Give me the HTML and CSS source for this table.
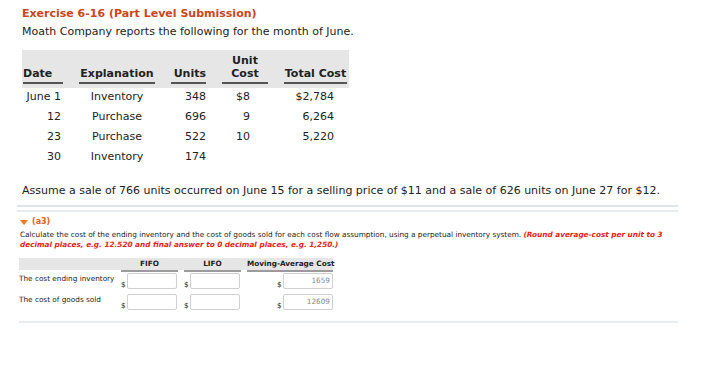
FILE: index.html
```html
<!DOCTYPE html>
<html>
<head>
<meta charset="utf-8">
<link rel="stylesheet" href="styles.css">
</head>
<body>
<div class="page">
  <h1 class="title">Exercise 6-16 (Part Level Submission)</h1>
  <p class="intro">Moath Company reports the following for the month of June.</p>
  <table class="data">
    <colgroup>
      <col class="k1"><col class="k2"><col class="k3"><col class="k4"><col class="k5">
    </colgroup>
    <thead>
      <tr>
        <th class="c1"><div class="u">Date</div></th>
        <th class="c2"><div class="u">Explanation</div></th>
        <th class="c3"><div class="u right">Units</div></th>
        <th class="c4"><div class="u">Unit<br>Cost</div></th>
        <th class="c5"><div class="u">Total Cost</div></th>
      </tr>
    </thead>
    <tbody>
      <tr><td class="c1 r">June 1</td><td class="c2 ctr">Inventory</td><td class="c3 r">348</td><td class="c4 uc">$8</td><td class="c5 tc">$2,784</td></tr>
      <tr><td class="c1 r">12</td><td class="c2 ctr">Purchase</td><td class="c3 r">696</td><td class="c4 uc">9</td><td class="c5 tc">6,264</td></tr>
      <tr><td class="c1 r">23</td><td class="c2 ctr">Purchase</td><td class="c3 r">522</td><td class="c4 uc">10</td><td class="c5 tc">5,220</td></tr>
      <tr><td class="c1 r">30</td><td class="c2 ctr">Inventory</td><td class="c3 r">174</td><td class="c4 uc"></td><td class="c5 tc"></td></tr>
    </tbody>
  </table>
  <p class="assume">Assume a sale of 766 units occurred on June 15 for a selling price of $11 and a sale of 626 units on June 27 for $12.</p>
</div>
<div class="sep"></div>
<div class="part">
  <div class="part-head"><span class="tri"></span>(a3)</div>
  <p class="instr">Calculate the cost of the ending inventory and the cost of goods sold for each cost flow assumption, using a perpetual inventory system. <em class="note">(Round average-cost per unit to 3 decimal places, e.g. 12.520 and final answer to 0 decimal places, e.g. 1,250.)</em></p>
  <table class="ans">
    <colgroup>
      <col class="w0"><col class="w1"><col class="w2"><col class="w3">
    </colgroup>
    <thead>
      <tr>
        <th></th>
        <th class="a1"><div class="u2">FIFO</div></th>
        <th class="a2"><div class="u2">LIFO</div></th>
        <th class="a3"><div class="u2">Moving-Average Cost</div></th>
      </tr>
    </thead>
    <tbody>
      <tr>
        <td class="lbl">The cost ending inventory</td>
        <td><div class="fld"><span class="d">$</span><span class="box"></span></div></td>
        <td class="pad"><div class="fld"><span class="d">$</span><span class="box"></span></div></td>
        <td class="pad"><div class="fld end"><span class="d">$</span><span class="box">1659</span></div></td>
      </tr>
      <tr>
        <td class="lbl">The cost of goods sold</td>
        <td><div class="fld"><span class="d">$</span><span class="box"></span></div></td>
        <td class="pad"><div class="fld"><span class="d">$</span><span class="box"></span></div></td>
        <td class="pad"><div class="fld end"><span class="d">$</span><span class="box">12609</span></div></td>
      </tr>
    </tbody>
  </table>
  <div class="bottom"></div>
</div>
</body>
</html>
```
FILE: styles.css
```css
html, body {
  margin: 0;
  padding: 0;
  background: #fff;
}
body {
  font-family: "DejaVu Sans", Verdana, sans-serif;
  color: #222;
}
.page {
  padding: 6px 0 0 22px;
}
.title {
  margin: 0;
  font-size: 11px;
  line-height: 15px;
  font-weight: bold;
  color: #c9461d;
}
.intro {
  margin: 3px 0 0;
  font-size: 11px;
  line-height: 16px;
}
.data {
  margin-top: 10px;
  border-collapse: collapse;
  table-layout: fixed;
  width: 327px;
  font-size: 11px;
}
.k1 { width: 49px; }
.k2 { width: 92px; }
.k3 { width: 51px; }
.k4 { width: 62px; }
.k5 { width: 73px; }
.data thead tr {
  background: #e6e6e6;
}
.data th {
  padding: 4px 8px 4px 8px;
  vertical-align: bottom;
  font-weight: bold;
  line-height: 13px;
  text-align: center;
  white-space: nowrap;
}
.data th.c1 { padding-left: 1px; text-align: left; }
.data th.c5 { padding-right: 2px; }
.u {
  border-bottom: 2px solid #555;
  padding-bottom: 2px;
}
.u.right { text-align: right; }
.data td {
  height: 20px;
  padding: 0 8px;
  line-height: 18px;
  vertical-align: top;
  white-space: nowrap;
}
.data td.c1 { padding-left: 1px; padding-right: 10px; }
.data td.c5 { padding-right: 15px; padding-left: 8px; }
.data td.uc { padding-right: 26px; text-align: right; }
.r { text-align: right; }
.ctr { text-align: center; }
.tc { text-align: right; }
.assume {
  margin: 15px 0 0;
  font-size: 11px;
  line-height: 16px;
}
.sep {
  margin: 6px 0 0 17px;
  width: 661px;
  height: 3px;
  border-top: 2px solid #dfe3ea;
  border-bottom: 2px solid #e8ebf0;
}
.part {
  padding: 5px 0 0 20px;
}
.part-head {
  display: flex;
  align-items: center;
  gap: 4px;
  font-size: 8px;
  font-weight: bold;
  color: #d9631e;
  line-height: 10px;
}
.tri {
  width: 0;
  height: 0;
  border-left: 4px solid transparent;
  border-right: 4px solid transparent;
  border-top: 5px solid #ef7b22;
}
.instr {
  margin: 3px 0 0;
  width: 650px;
  font-size: 7.3px;
  line-height: 10px;
  color: #222;
}
.note {
  color: #e8231c;
  font-weight: bold;
}
.ans {
  margin: 8px 0 0 -1px;
  border-collapse: collapse;
  table-layout: fixed;
  width: 314px;
  font-size: 7.3px;
}
.w0 { width: 102px; }
.w1 { width: 57px; }
.w2 { width: 63px; }
.w3 { width: 92px; }
.ans thead tr {
  background: #e6e6e6;
}
.ans th {
  padding: 1px 0 0;
  font-weight: bold;
  vertical-align: bottom;
  white-space: nowrap;
}
.ans th.a2, .ans th.a3 { padding-left: 6px; }
.u2 {
  border-bottom: 2px solid #9b9b9b;
  line-height: 10px;
  padding-bottom: 1px;
  margin-bottom: -2px;
}
.ans td {
  padding: 3px 0 2px;
  vertical-align: top;
}
.ans td.pad { padding-left: 6px; }
.lbl {
  line-height: 12px;
  padding-top: 2px;
  white-space: nowrap;
}
.fld {
  display: flex;
  align-items: flex-end;
  gap: 2px;
}
.fld.end {
  justify-content: flex-end;
}
.d {
  font-size: 7.3px;
  line-height: 8px;
  width: 4px;
}
.box {
  box-sizing: border-box;
  width: 50px;
  height: 16px;
  border: 1px solid #cfcfcf;
  border-radius: 2px;
  text-align: right;
  padding-right: 2px;
  color: #888;
  font-size: 7.3px;
  line-height: 14px;
}
.bottom {
  margin: 9px 0 0 -1px;
  width: 659px;
  border-top: 2px solid #e8ebf1;
}
```
